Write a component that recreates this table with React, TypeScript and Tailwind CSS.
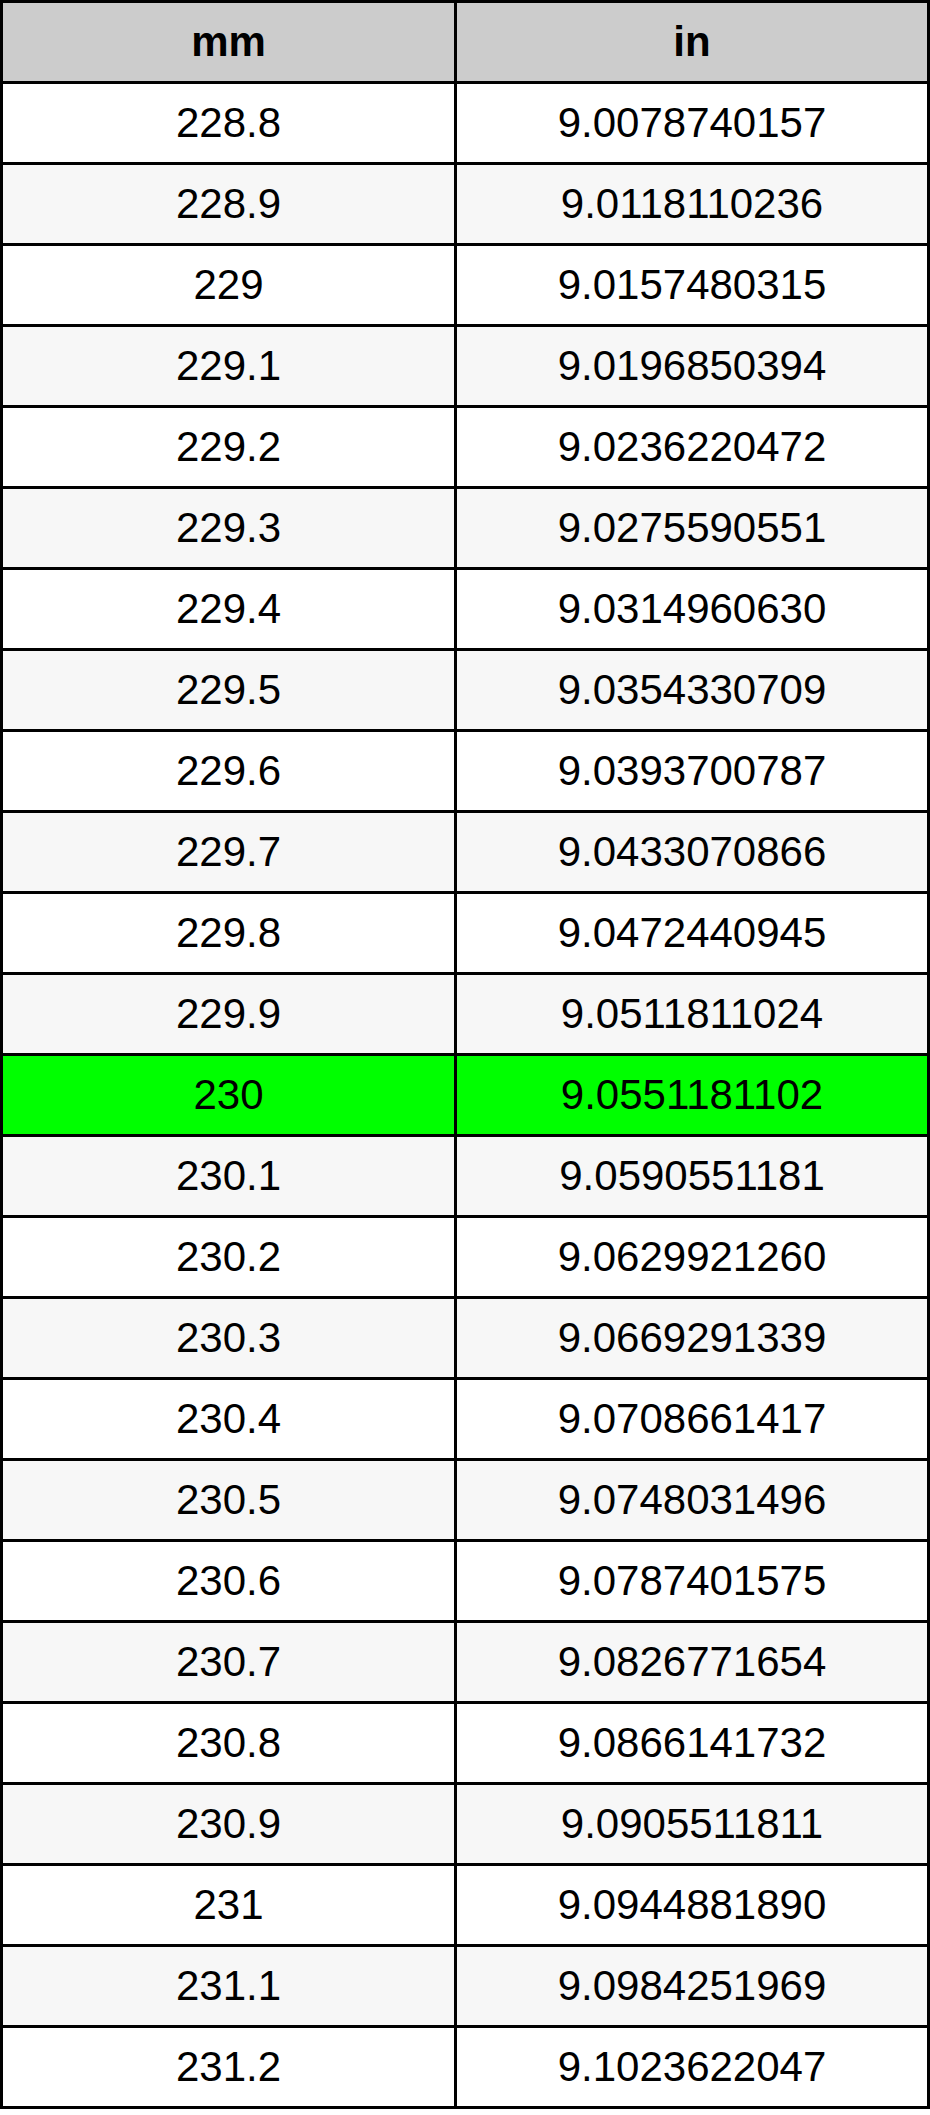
const rows: [string, string][] = [
  ['228.8', '9.0078740157'],
  ['228.9', '9.0118110236'],
  ['229', '9.0157480315'],
  ['229.1', '9.0196850394'],
  ['229.2', '9.0236220472'],
  ['229.3', '9.0275590551'],
  ['229.4', '9.0314960630'],
  ['229.5', '9.0354330709'],
  ['229.6', '9.0393700787'],
  ['229.7', '9.0433070866'],
  ['229.8', '9.0472440945'],
  ['229.9', '9.0511811024'],
  ['230', '9.0551181102'],
  ['230.1', '9.0590551181'],
  ['230.2', '9.0629921260'],
  ['230.3', '9.0669291339'],
  ['230.4', '9.0708661417'],
  ['230.5', '9.0748031496'],
  ['230.6', '9.0787401575'],
  ['230.7', '9.0826771654'],
  ['230.8', '9.0866141732'],
  ['230.9', '9.0905511811'],
  ['231', '9.0944881890'],
  ['231.1', '9.0984251969'],
  ['231.2', '9.1023622047'],
];

const App = () => {
  return (
    <div className="w-[930px] bg-white font-['Liberation_Sans',Arial,sans-serif] text-black">
      <div className="border-x-[3px] border-t-[3px] border-black">
        <div className="flex h-[81px] border-b-[3px] border-black bg-[#cccccc] text-[42px] font-bold leading-none">
          <div className="flex w-[454px] items-center justify-center border-r-[3px] border-black">mm</div>
          <div className="flex flex-1 items-center justify-center">in</div>
        </div>
        {rows.map(([mm, inch], i) => {
          const bg = mm === '230' ? 'bg-[#00ff00]' : i % 2 === 1 ? 'bg-[#f7f7f7]' : 'bg-white';
          return (
            <div key={mm} className={`flex h-[81px] border-b-[3px] border-black text-[42px] leading-none ${bg}`}>
              <div className="flex w-[454px] items-center justify-center border-r-[3px] border-black">{mm}</div>
              <div className="flex flex-1 items-center justify-center">{inch}</div>
            </div>
          );
        })}
      </div>
    </div>
  );
};

export default App;
